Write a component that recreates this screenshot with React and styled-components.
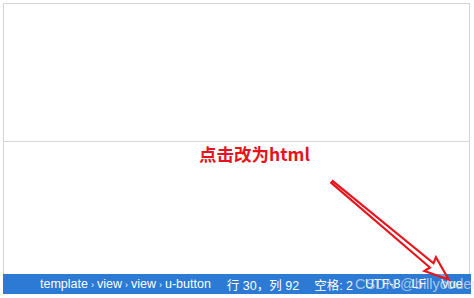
import React from 'react';
import styled, { createGlobalStyle } from 'styled-components';

const Global = createGlobalStyle`
  html, body { margin: 0; padding: 0; background: #fff; }
  body { font-family: "Liberation Sans", "Noto Sans CJK SC", sans-serif; }
`;

const Page = styled.div`
  position: relative;
  width: 474px;
  height: 298px;
  box-sizing: border-box;
  padding: 3px 3px 4px 3px;
  display: flex;
  flex-direction: column;
  background: #fff;
  overflow: hidden;
`;

const Editor = styled.div`
  flex: 1;
  display: flex;
  flex-direction: column;
  border: 1px solid #d4d4d4;
  border-bottom: none;
  margin-right: 1px;
`;

const Pane = styled.div`
  height: ${(p) => p.h}px;
  flex: ${(p) => (p.h ? 'none' : 1)};
  border-bottom: ${(p) => (p.divider ? '1px solid #d6d6d6' : 'none')};
  display: flex;
  justify-content: center;
  align-items: flex-start;
`;

const Note = styled.div`
  margin-top: 1px;
  margin-left: 36px;
  color: #e5131b;
  font-family: "Noto Sans CJK SC", "Noto Sans", sans-serif;
  font-weight: 700;
  font-size: 17.5px;
  line-height: 22px;
  text-shadow: 0 0 2px #fff, 0 0 2px #fff;
`;

const StatusBar = styled.div`
  height: 20px;
  background: #2c7ad3;
  display: flex;
  align-items: center;
  color: #fff;
  font-size: 12.5px;
  white-space: nowrap;
  padding-left: 37px;
`;

const Item = styled.span`
  margin-right: ${(p) => p.gap}px;
`;

const Sep = styled.span`
  font-size: 9px;
  margin: 0 3px;
`;

const Watermark = styled.div`
  position: absolute;
  left: 355px;
  top: 275px;
  white-space: nowrap;
  color: rgba(225, 230, 240, 0.7);
  font-family: "Liberation Sans", sans-serif;
  font-size: 14.5px;
  line-height: 18px;
  pointer-events: none;
`;

const Overlay = styled.svg`
  position: absolute;
  left: 0;
  top: 0;
  pointer-events: none;
`;

export default function App() {
  const L = 152;
  return (
    <>
      <Global />
      <Page>
        <Editor>
          <Pane h={137} divider />
          <Pane>
            <Note>点击改为html</Note>
          </Pane>
        </Editor>
        <StatusBar>
          <Item gap={16}>
            template<Sep>›</Sep>view<Sep>›</Sep>view<Sep>›</Sep>u-button
          </Item>
          <Item gap={15}>行 30，列 92</Item>
          <Item gap={12}>空格: 2</Item>
          <Item gap={11}>UTF-8</Item>
          <Item gap={15}>LF</Item>
          <Item gap={0}>Vue</Item>
        </StatusBar>
        <Watermark>CSDN @billycoder</Watermark>
        <Overlay width="474" height="298" viewBox="0 0 474 298">
          <g transform="translate(332 182) rotate(39.9)">
            <polygon
              points={`0,-1.2 ${L - 22},-2.8 ${L - 24},-9 ${L},0 ${L - 24},9 ${L - 22},2.8 0,1.2`}
              fill="rgba(255,255,255,0.3)"
              stroke="#e8141c"
              strokeWidth="2.2"
              strokeLinejoin="miter"
            />
          </g>
        </Overlay>
      </Page>
    </>
  );
}
